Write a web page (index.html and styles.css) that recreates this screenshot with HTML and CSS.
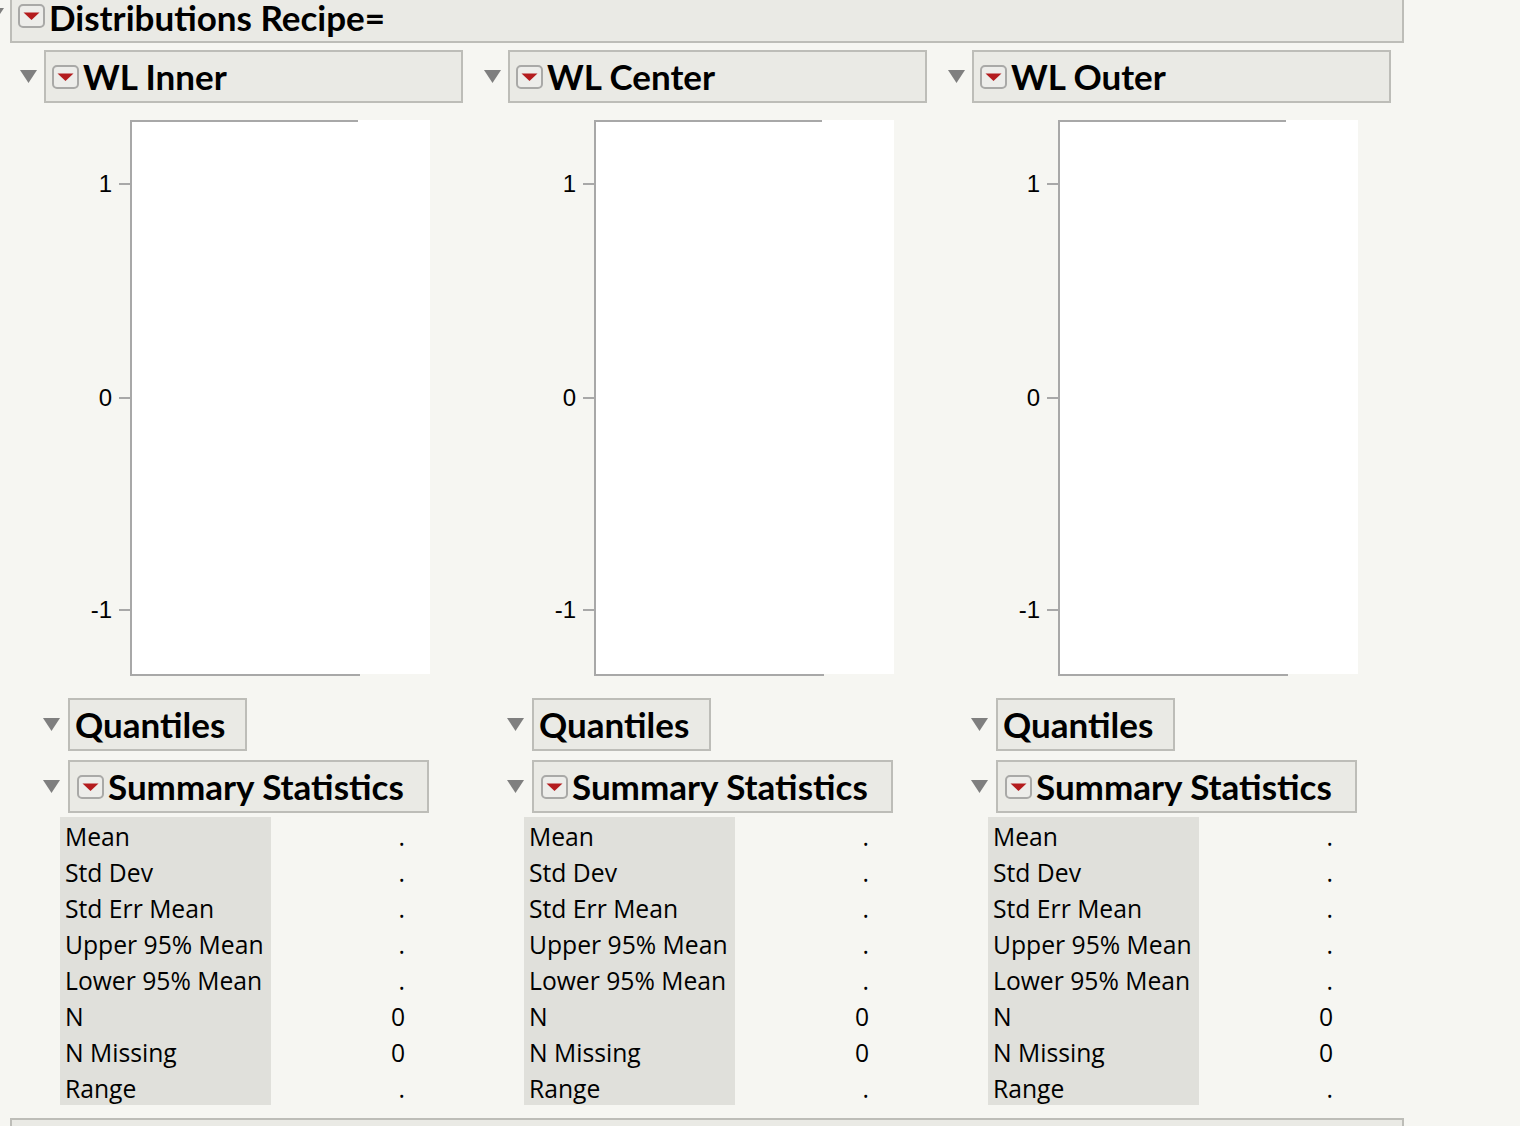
FILE: index.html
```html
<!DOCTYPE html>
<html lang="en">
<head>
    <meta charset="UTF-8">
    <title>Distributions Recipe=</title>
    <link rel="stylesheet" href="styles.css">
</head>
<body>
    <div class="report">
        <!-- Report title bar -->
        <div class="outline-head report-head">
            <svg class="toggle cut" viewBox="0 0 17 13"><polygon points="0,0 17,0 8.5,13"/></svg>
            <svg class="menu" viewBox="0 0 27 24"><rect x="1" y="1" width="25" height="22" rx="4"/><polygon points="5.5,8.5 21.5,8.5 13.5,16"/></svg>
            <span class="title">Distributions Recipe=</span>
        </div>

        <div class="columns">
            <!-- WL Inner -->
            <div class="dist">
                <div class="dist-head">
                    <svg class="toggle" viewBox="0 0 17 13"><polygon points="0,0 17,0 8.5,13"/></svg>
                    <div class="outline-head wide">
                        <svg class="menu" viewBox="0 0 27 24"><rect x="1" y="1" width="25" height="22" rx="4"/><polygon points="5.5,8.5 21.5,8.5 13.5,16"/></svg>
                        <span class="title">WL Inner</span>
                    </div>
                </div>
                <div class="plot">
                    <div class="axis">
                        <div class="tick" style="top: 64px;">1</div>
                        <div class="tick" style="top: 278px;">0</div>
                        <div class="tick" style="top: 490px;">-1</div>
                    </div>
                    <div class="frame"></div>
                </div>
                <div class="sub-head quantiles">
                    <svg class="toggle" viewBox="0 0 17 13"><polygon points="0,0 17,0 8.5,13"/></svg>
                    <div class="outline-head">
                        <span class="title">Quantiles</span>
                    </div>
                </div>
                <div class="sub-head summary">
                    <svg class="toggle" viewBox="0 0 17 13"><polygon points="0,0 17,0 8.5,13"/></svg>
                    <div class="outline-head">
                        <svg class="menu" viewBox="0 0 27 24"><rect x="1" y="1" width="25" height="22" rx="4"/><polygon points="5.5,8.5 21.5,8.5 13.5,16"/></svg>
                        <span class="title">Summary Statistics</span>
                    </div>
                </div>
                <div class="stats">
                    <div class="label">Mean</div><div class="value">.</div>
                    <div class="label">Std Dev</div><div class="value">.</div>
                    <div class="label">Std Err Mean</div><div class="value">.</div>
                    <div class="label">Upper 95% Mean</div><div class="value">.</div>
                    <div class="label">Lower 95% Mean</div><div class="value">.</div>
                    <div class="label">N</div><div class="value">0</div>
                    <div class="label">N Missing</div><div class="value">0</div>
                    <div class="label">Range</div><div class="value">.</div>
                </div>
            </div>

            <!-- WL Center -->
            <div class="dist">
                <div class="dist-head">
                    <svg class="toggle" viewBox="0 0 17 13"><polygon points="0,0 17,0 8.5,13"/></svg>
                    <div class="outline-head wide">
                        <svg class="menu" viewBox="0 0 27 24"><rect x="1" y="1" width="25" height="22" rx="4"/><polygon points="5.5,8.5 21.5,8.5 13.5,16"/></svg>
                        <span class="title">WL Center</span>
                    </div>
                </div>
                <div class="plot">
                    <div class="axis">
                        <div class="tick" style="top: 64px;">1</div>
                        <div class="tick" style="top: 278px;">0</div>
                        <div class="tick" style="top: 490px;">-1</div>
                    </div>
                    <div class="frame"></div>
                </div>
                <div class="sub-head quantiles">
                    <svg class="toggle" viewBox="0 0 17 13"><polygon points="0,0 17,0 8.5,13"/></svg>
                    <div class="outline-head">
                        <span class="title">Quantiles</span>
                    </div>
                </div>
                <div class="sub-head summary">
                    <svg class="toggle" viewBox="0 0 17 13"><polygon points="0,0 17,0 8.5,13"/></svg>
                    <div class="outline-head">
                        <svg class="menu" viewBox="0 0 27 24"><rect x="1" y="1" width="25" height="22" rx="4"/><polygon points="5.5,8.5 21.5,8.5 13.5,16"/></svg>
                        <span class="title">Summary Statistics</span>
                    </div>
                </div>
                <div class="stats">
                    <div class="label">Mean</div><div class="value">.</div>
                    <div class="label">Std Dev</div><div class="value">.</div>
                    <div class="label">Std Err Mean</div><div class="value">.</div>
                    <div class="label">Upper 95% Mean</div><div class="value">.</div>
                    <div class="label">Lower 95% Mean</div><div class="value">.</div>
                    <div class="label">N</div><div class="value">0</div>
                    <div class="label">N Missing</div><div class="value">0</div>
                    <div class="label">Range</div><div class="value">.</div>
                </div>
            </div>

            <!-- WL Outer -->
            <div class="dist">
                <div class="dist-head">
                    <svg class="toggle" viewBox="0 0 17 13"><polygon points="0,0 17,0 8.5,13"/></svg>
                    <div class="outline-head wide">
                        <svg class="menu" viewBox="0 0 27 24"><rect x="1" y="1" width="25" height="22" rx="4"/><polygon points="5.5,8.5 21.5,8.5 13.5,16"/></svg>
                        <span class="title">WL Outer</span>
                    </div>
                </div>
                <div class="plot">
                    <div class="axis">
                        <div class="tick" style="top: 64px;">1</div>
                        <div class="tick" style="top: 278px;">0</div>
                        <div class="tick" style="top: 490px;">-1</div>
                    </div>
                    <div class="frame"></div>
                </div>
                <div class="sub-head quantiles">
                    <svg class="toggle" viewBox="0 0 17 13"><polygon points="0,0 17,0 8.5,13"/></svg>
                    <div class="outline-head">
                        <span class="title">Quantiles</span>
                    </div>
                </div>
                <div class="sub-head summary">
                    <svg class="toggle" viewBox="0 0 17 13"><polygon points="0,0 17,0 8.5,13"/></svg>
                    <div class="outline-head">
                        <svg class="menu" viewBox="0 0 27 24"><rect x="1" y="1" width="25" height="22" rx="4"/><polygon points="5.5,8.5 21.5,8.5 13.5,16"/></svg>
                        <span class="title">Summary Statistics</span>
                    </div>
                </div>
                <div class="stats">
                    <div class="label">Mean</div><div class="value">.</div>
                    <div class="label">Std Dev</div><div class="value">.</div>
                    <div class="label">Std Err Mean</div><div class="value">.</div>
                    <div class="label">Upper 95% Mean</div><div class="value">.</div>
                    <div class="label">Lower 95% Mean</div><div class="value">.</div>
                    <div class="label">N</div><div class="value">0</div>
                    <div class="label">N Missing</div><div class="value">0</div>
                    <div class="label">Range</div><div class="value">.</div>
                </div>
            </div>
        </div>

        <!-- Next outline, cut off by the window -->
        <div class="outline-head next-head"></div>
    </div>
</body>
</html>
```

FILE: styles.css
```css
/* Page */
body {
    margin: 0;
    height: 1126px;
    overflow: hidden;
    background-color: #f6f6f2;
    font-family: "Open Sans", sans-serif;
    color: #000;
}

.report {
    margin-left: 10px;
    width: 1394px;
}

/* Outline header boxes */
.outline-head {
    display: flex;
    align-items: center;
    box-sizing: border-box;
    height: 53px;
    background-color: #eaeae5;
    border: 2px solid #bdbdb8;
}

.title {
    font-family: Lato, sans-serif;
    font-weight: bold;
    font-size: 35px;
    line-height: 1;
    white-space: nowrap;
}

/* Gray disclosure triangle */
.toggle {
    flex: none;
    width: 17px;
    height: 13px;
    fill: #7f7f7f;
}

/* Red popup menu button */
.menu {
    flex: none;
    width: 27px;
    height: 24px;
}

.menu rect {
    fill: #ededea;
    stroke: #a9a9a7;
    stroke-width: 2;
}

.menu polygon {
    fill: #b41c1e;
}

.report-head {
    height: 43px;
    border-top: none;
    padding-left: 6px;
    gap: 4px;
}

.report-head .menu {
    margin-bottom: 10px;
}

.report-head .title {
    margin-bottom: 6px;
}

.report-head .toggle.cut {
    margin-left: -31px;
    margin-right: 10px;
    margin-top: -12px;
}

/* Three distribution columns */
.columns {
    display: flex;
    margin-top: 7px;
    padding-left: 10px;
}

.dist {
    width: 464px;
    flex: none;
}

.dist-head {
    display: flex;
    align-items: center;
    gap: 7px;
}

.dist-head .outline-head {
    width: 419px;
    padding-left: 6px;
    gap: 4px;
}

/* Plot */
.plot {
    display: flex;
    height: 556px;
    margin-top: 17px;
}

.axis {
    position: relative;
    width: 110px;
}

.tick {
    position: absolute;
    right: 0;
    display: flex;
    align-items: center;
    gap: 7px;
    transform: translateY(-50%);
    font-family: "Liberation Sans", sans-serif;
    font-size: 24px;
    line-height: 1;
}

.tick::after {
    content: '';
    width: 11px;
    height: 2px;
    background-color: #a8a8a8;
}

.frame {
    position: relative;
    width: 298px;
    height: 554px;
    background-color: #fff;
    border-left: 2px solid #a8a8a8;
}

.frame::before {
    content: '';
    position: absolute;
    top: 0;
    left: 0;
    width: 226px;
    height: 2px;
    background-color: #a8a8a8;
}

.frame::after {
    content: '';
    position: absolute;
    bottom: -2px;
    left: -2px;
    width: 230px;
    height: 2px;
    background-color: #a8a8a8;
}

/* Quantiles / Summary Statistics */
.sub-head {
    display: flex;
    align-items: center;
    gap: 8px;
    margin-left: 23px;
}

.quantiles {
    margin-top: 22px;
}

.quantiles .outline-head {
    width: 179px;
    padding-left: 5px;
}

.summary {
    margin-top: 9px;
}

.summary .outline-head {
    width: 361px;
    padding-left: 7px;
    gap: 4px;
}

/* Stats table */
.stats {
    display: grid;
    grid-template-columns: 211px 136px;
    margin-top: 4px;
    margin-left: 40px;
    font-size: 24.7px;
    line-height: 32px;
}

.stats .label,
.stats .value {
    padding-top: 4px;
}

.stats .label {
    background-color: #e0e0db;
    padding-left: 5px;
    white-space: nowrap;
}

.stats .value {
    text-align: right;
    padding-right: 2px;
}

.next-head {
    height: 40px;
    margin-top: 13px;
}
```
